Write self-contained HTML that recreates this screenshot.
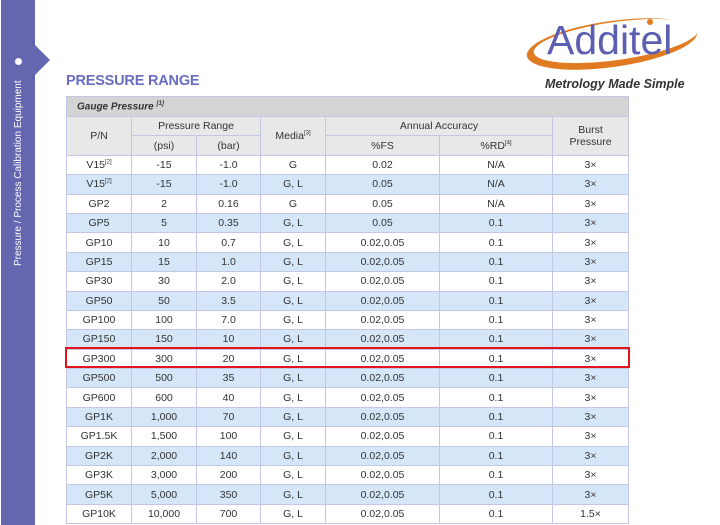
<!DOCTYPE html>
<html><head><meta charset="utf-8"><style>
body{margin:0;width:720px;height:525px;overflow:hidden;background:#fff;font-family:"Liberation Sans",Arial,sans-serif;position:relative}
.side{position:absolute;left:1px;top:0;width:34px;height:525px;background:#6466b0}
.notch{position:absolute;left:35px;top:45px;width:0;height:0;border-top:15px solid transparent;border-bottom:15px solid transparent;border-left:15px solid #6466b0}
.dot{position:absolute;left:15px;top:58px;width:7px;height:7px;border-radius:50%;background:#fff}
.vt{position:absolute;left:12px;top:266px;transform-origin:0 0;transform:rotate(-90deg);color:#fff;font-size:10px;line-height:13px;white-space:nowrap}
h1{position:absolute;left:66px;top:73px;margin:0;font-size:14.5px;color:#6a6cc0;font-weight:bold;letter-spacing:-0.2px}
table{position:absolute;left:66px;top:96px;border-collapse:collapse;width:562px;table-layout:fixed;font-size:10.5px;color:#333}
td{border:1px solid #c3c6e4;text-align:center;padding:0;height:18.4px}
.g td{background:#d4d4d4;text-align:left;font-style:italic;font-weight:bold;padding-left:10px;height:19px;font-size:10px}
.h td{background:#e8e8e8}
tr.b td{background:#d5e6f8}
sup{font-size:6px}
.red{position:absolute;left:65px;top:347px;width:561px;height:17px;border:2px solid #e3141b}
</style></head><body>
<div class="side"></div><div class="notch"></div><div class="dot"></div>
<div class="vt">Pressure / Process Calibration Equipment</div>
<svg style="position:absolute;left:520px;top:0px" width="200" height="80">
<ellipse cx="92" cy="44" rx="86" ry="23" transform="rotate(-8 92 44)" fill="#e07b22"/>
<ellipse cx="96" cy="41" rx="83" ry="19" transform="rotate(-8 96 41)" fill="#fff"/>
<text x="27" y="54" font-family="Liberation Sans" font-size="41" fill="#5c5eb2">Additel</text>
<circle cx="130" cy="22" r="3" fill="#e07b22"/>
</svg>
<div style="position:absolute;left:545px;top:77px;font-size:12.5px;font-weight:bold;font-style:italic;color:#333">Metrology Made Simple</div>
<h1>PRESSURE RANGE</h1>
<table>
<colgroup><col style="width:65px"><col style="width:65px"><col style="width:64px"><col style="width:65px"><col style="width:114px"><col style="width:113px"><col style="width:76px"></colgroup>
<tr class="g"><td colspan="7">Gauge Pressure <sup>[1]</sup></td></tr>
<tr class="h"><td rowspan="2">P/N</td><td colspan="2">Pressure Range</td><td rowspan="2">Media<sup>[3]</sup></td><td colspan="2">Annual Accuracy</td><td rowspan="2">Burst<br>Pressure</td></tr>
<tr class="h"><td>(psi)</td><td>(bar)</td><td>%FS</td><td>%RD<sup>[4]</sup></td></tr>
<tr><td>V15<sup>[2]</sup></td><td>-15</td><td>-1.0</td><td>G</td><td>0.02</td><td>N/A</td><td>3×</td></tr>
<tr class="b"><td>V15<sup>[2]</sup></td><td>-15</td><td>-1.0</td><td>G, L</td><td>0.05</td><td>N/A</td><td>3×</td></tr>
<tr><td>GP2</td><td>2</td><td>0.16</td><td>G</td><td>0.05</td><td>N/A</td><td>3×</td></tr>
<tr class="b"><td>GP5</td><td>5</td><td>0.35</td><td>G, L</td><td>0.05</td><td>0.1</td><td>3×</td></tr>
<tr><td>GP10</td><td>10</td><td>0.7</td><td>G, L</td><td>0.02,0.05</td><td>0.1</td><td>3×</td></tr>
<tr class="b"><td>GP15</td><td>15</td><td>1.0</td><td>G, L</td><td>0.02,0.05</td><td>0.1</td><td>3×</td></tr>
<tr><td>GP30</td><td>30</td><td>2.0</td><td>G, L</td><td>0.02,0.05</td><td>0.1</td><td>3×</td></tr>
<tr class="b"><td>GP50</td><td>50</td><td>3.5</td><td>G, L</td><td>0.02,0.05</td><td>0.1</td><td>3×</td></tr>
<tr><td>GP100</td><td>100</td><td>7.0</td><td>G, L</td><td>0.02,0.05</td><td>0.1</td><td>3×</td></tr>
<tr class="b"><td>GP150</td><td>150</td><td>10</td><td>G, L</td><td>0.02,0.05</td><td>0.1</td><td>3×</td></tr>
<tr><td>GP300</td><td>300</td><td>20</td><td>G, L</td><td>0.02,0.05</td><td>0.1</td><td>3×</td></tr>
<tr class="b"><td>GP500</td><td>500</td><td>35</td><td>G, L</td><td>0.02,0.05</td><td>0.1</td><td>3×</td></tr>
<tr><td>GP600</td><td>600</td><td>40</td><td>G, L</td><td>0.02,0.05</td><td>0.1</td><td>3×</td></tr>
<tr class="b"><td>GP1K</td><td>1,000</td><td>70</td><td>G, L</td><td>0.02,0.05</td><td>0.1</td><td>3×</td></tr>
<tr><td>GP1.5K</td><td>1,500</td><td>100</td><td>G, L</td><td>0.02,0.05</td><td>0.1</td><td>3×</td></tr>
<tr class="b"><td>GP2K</td><td>2,000</td><td>140</td><td>G, L</td><td>0.02,0.05</td><td>0.1</td><td>3×</td></tr>
<tr><td>GP3K</td><td>3,000</td><td>200</td><td>G, L</td><td>0.02,0.05</td><td>0.1</td><td>3×</td></tr>
<tr class="b"><td>GP5K</td><td>5,000</td><td>350</td><td>G, L</td><td>0.02,0.05</td><td>0.1</td><td>3×</td></tr>
<tr><td>GP10K</td><td>10,000</td><td>700</td><td>G, L</td><td>0.02,0.05</td><td>0.1</td><td>1.5×</td></tr>
</table>
<div class="red"></div>
</body></html>
